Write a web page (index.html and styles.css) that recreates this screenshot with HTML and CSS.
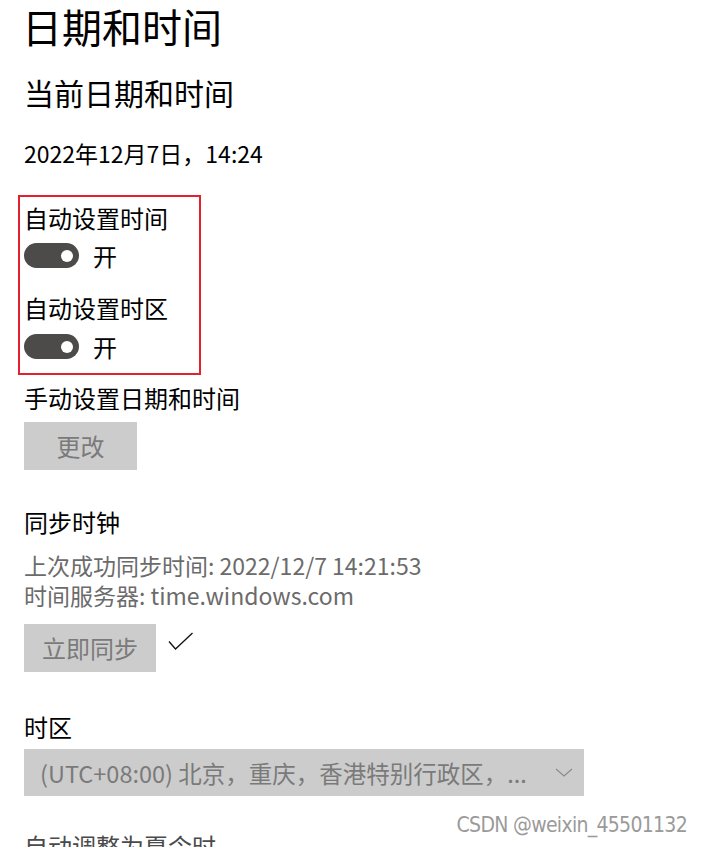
FILE: index.html
```html
<!DOCTYPE html>
<html lang="zh-CN">
<head>
<meta charset="utf-8">
<title>日期和时间</title>
<link rel="stylesheet" href="styles.css">
</head>
<body>
<main class="page">
  <h1 class="title">日期和时间</h1>
  <h2 class="subtitle">当前日期和时间</h2>
  <p class="date">2022年12月7日，14:24</p>

  <section class="highlight">
    <div class="label first">自动设置时间</div>
    <div class="toggle-row">
      <span class="toggle"><span class="knob"></span></span>
      <span class="toggle-text">开</span>
    </div>
    <div class="label second">自动设置时区</div>
    <div class="toggle-row">
      <span class="toggle"><span class="knob"></span></span>
      <span class="toggle-text">开</span>
    </div>
  </section>

  <div class="label manual">手动设置日期和时间</div>
  <button class="btn btn-change" type="button">更改</button>

  <div class="label sync">同步时钟</div>
  <p class="info">上次成功同步时间: 2022/12/7 14:21:53<br>时间服务器: time.windows.com</p>
  <div class="sync-row">
    <button class="btn btn-sync" type="button">立即同步</button>
    <svg class="check" width="26" height="20" viewBox="0 0 26 20" aria-hidden="true">
      <path d="M1 9.5 L7.5 17 L24.5 1" fill="none" stroke="#111" stroke-width="1.3"/>
    </svg>
  </div>

  <div class="label tz">时区</div>
  <div class="dropdown">
    <span class="dropdown-text">(UTC+08:00) 北京，重庆，香港特别行政区，...</span>
    <svg class="chevron" width="18" height="9" viewBox="0 0 18 9" aria-hidden="true">
      <path d="M1 1 L9 8 L17 1" fill="none" stroke="#8a8a8a" stroke-width="1.1"/>
    </svg>
  </div>

  <div class="label dst">自动调整为夏令时</div>
</main>
<div class="watermark">CSDN @weixin_45501132</div>
</body>
</html>
```

FILE: styles.css
```css
html, body {
  margin: 0;
  padding: 0;
  background: #ffffff;
  overflow: hidden;
}

body {
  width: 704px;
  height: 847px;
  position: relative;
  font-family: "Noto Sans CJK SC", "Noto Sans", sans-serif;
  color: #000;
}

.page {
  padding: 3px 0 0 24px;
  display: flex;
  flex-direction: column;
  align-items: flex-start;
}

.title {
  margin: 0 0 0 -2px;
  font-size: 40px;
  line-height: 46px;
  font-weight: 400;
}

.subtitle {
  margin: 25px 0 0 0;
  font-size: 30px;
  line-height: 36px;
  font-weight: 400;
}

.date {
  margin: 28px 0 0 0;
  font-size: 23px;
  line-height: 30px;
}

.label {
  font-size: 24px;
  line-height: 30px;
}

.highlight {
  margin: 27px 0 0 -6px;
  width: 175px;
  border: 2px solid #e5202e;
  padding: 6px 0 14px 4px;
  box-sizing: content-box;
  display: flex;
  flex-direction: column;
  align-items: flex-start;
}

.label.second {
  margin-top: 25px;
}

.toggle-row {
  margin-top: 10px;
  display: flex;
  align-items: center;
  gap: 14px;
  height: 25px;
}

.label.second + .toggle-row {
  margin-top: 11px;
}

.toggle {
  width: 55px;
  height: 25px;
  border-radius: 13px;
  background: #4c4b4a;
  display: flex;
  align-items: center;
  justify-content: flex-end;
  padding-right: 6px;
  box-sizing: border-box;
}

.knob {
  width: 12px;
  height: 12px;
  border-radius: 50%;
  background: #ffffff;
}

.toggle-text {
  font-size: 24px;
  line-height: 25px;
}

.label.manual {
  margin-top: 8px;
}

.btn {
  font-family: inherit;
  border: none;
  background: #cccccc;
  color: #7a7a7a;
  font-size: 24px;
  line-height: 48px;
  height: 48px;
  padding: 0 16px;
  margin: 0;
}

.btn-change {
  margin-top: 9px;
  width: 113px;
}

.label.sync {
  margin-top: 37px;
}

.info {
  margin: 13px 0 0 0;
  font-size: 23px;
  line-height: 30px;
  color: #6b6b6b;
}

.sync-row {
  margin-top: 14px;
  display: flex;
  align-items: flex-start;
  gap: 12px;
}

.btn-sync {
  width: 132px;
}

.check {
  margin-top: 8px;
}

.label.tz {
  margin-top: 40px;
}

.dropdown {
  margin-top: 7px;
  width: 560px;
  height: 47px;
  background: #cccccc;
  display: flex;
  align-items: center;
  justify-content: space-between;
  padding: 0 11px 0 16px;
  box-sizing: border-box;
}

.dropdown-text {
  font-size: 23.5px;
  color: #7a7a7a;
  white-space: nowrap;
}

.chevron {
  display: block;
}

.label.dst {
  margin-top: 35px;
  color: #4a4a4a;
}

.watermark {
  position: absolute;
  right: 17px;
  top: 812px;
  font-family: "Liberation Sans Narrow", "DejaVu Sans Condensed", "Liberation Sans", sans-serif;
  font-stretch: condensed;
  font-size: 21px;
  line-height: 26px;
  letter-spacing: -0.7px;
  color: #9a9a9a;
}
```
